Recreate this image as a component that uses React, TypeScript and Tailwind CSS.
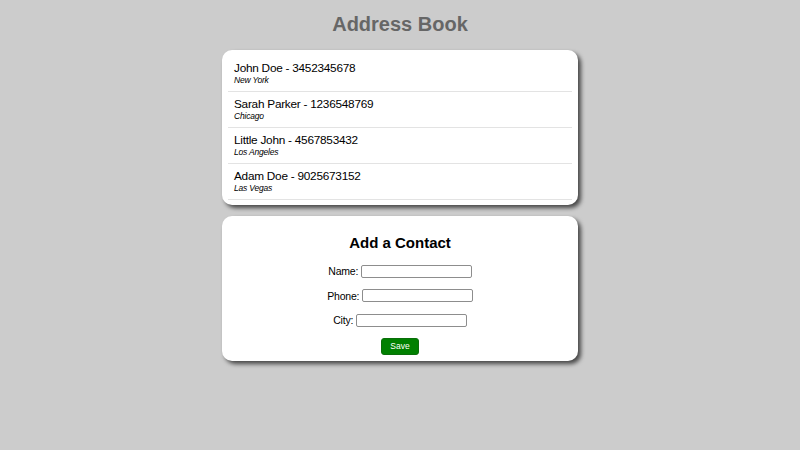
const contacts = [
  { name: "John Doe", phone: "3452345678", city: "New York" },
  { name: "Sarah Parker", phone: "1236548769", city: "Chicago" },
  { name: "Little John", phone: "4567853432", city: "Los Angeles" },
  { name: "Adam Doe", phone: "9025673152", city: "Las Vegas" },
];

function Field({ label }: { label: string }) {
  return (
    <div className="flex h-[24.5px] items-center justify-center gap-[2.5px]">
      <label className="text-[10.5px] leading-[12px] tracking-[-0.2px] text-black">{label}</label>
      <input
        type="text"
        className="box-border h-[13px] w-[111px] rounded-[2px] border border-[#8d8d8d] bg-white outline-none"
      />
    </div>
  );
}

export default function App() {
  return (
    <div
      className="min-h-[450px] w-full bg-[#cccccc] pt-[12px]"
      style={{ fontFamily: '"Liberation Sans", Arial, sans-serif' }}
    >
      <h1 className="text-center text-[20px] font-bold leading-[24px] text-[#666666]">
        Address Book
      </h1>
      <div className="mx-auto mt-[14px] flex w-[356px] flex-col gap-[11px]">
        <div className="rounded-[10px] bg-white px-[6px] pb-[5px] pt-[6px] shadow-[3px_3px_4px_rgba(0,0,0,0.65)]">
          {contacts.map((c) => (
            <div
              key={c.phone}
              className="box-border h-[36px] border-b border-[#e3e3e3] px-[6px] pt-[6px]"
            >
              <div className="text-[11.8px] leading-[13px] tracking-[-0.25px] text-black">
                {c.name} - {c.phone}
              </div>
              <div className="text-[8.5px] italic leading-[10px] tracking-[-0.2px] text-black">
                {c.city}
              </div>
            </div>
          ))}
        </div>
        <div className="flex flex-col items-center rounded-[10px] bg-white pb-[6px] pt-[18px] shadow-[3px_3px_4px_rgba(0,0,0,0.65)]">
          <h2 className="text-[15px] font-bold leading-[18px] text-black">Add a Contact</h2>
          <div className="mt-[7px] flex w-full flex-col">
            <Field label="Name:" />
            <Field label="Phone:" />
            <Field label="City:" />
          </div>
          <button
            type="button"
            className="mt-[5.5px] h-[17px] w-[38px] rounded-[3px] border border-[#0a6e0a] bg-[#008000] text-[8.5px] leading-[15px] text-white"
          >
            Save
          </button>
        </div>
      </div>
    </div>
  );
}
